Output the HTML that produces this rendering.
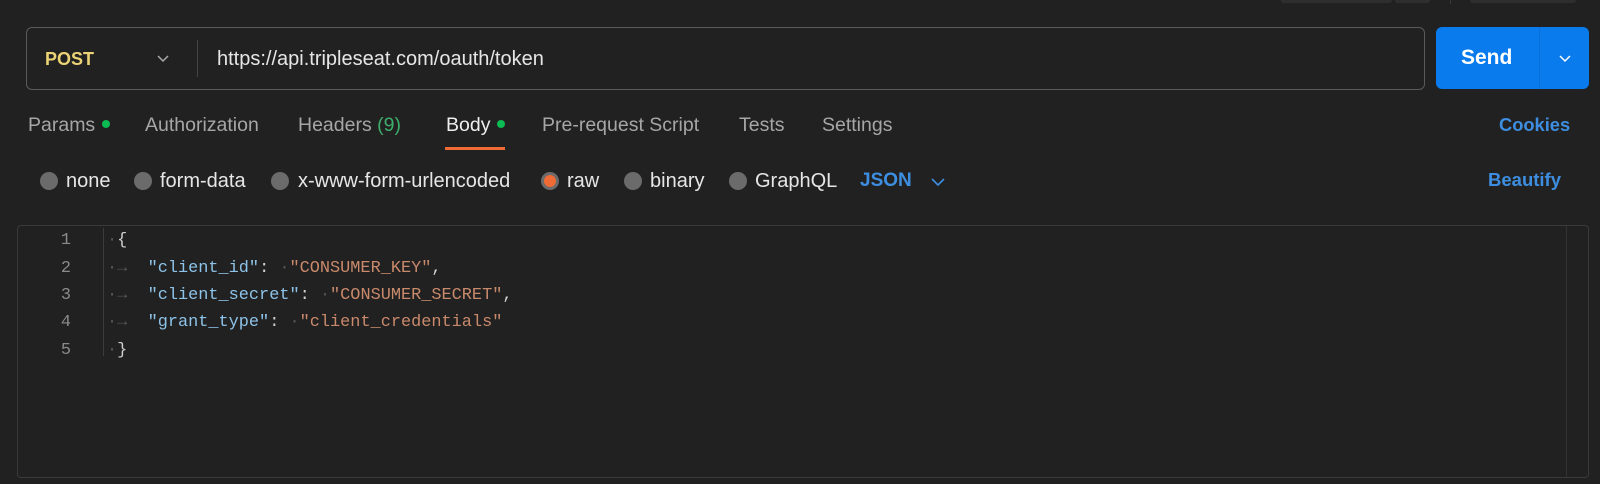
<!DOCTYPE html>
<html><head><meta charset="utf-8"><style>
body{margin:0;width:1600px;height:484px;background:#212121;overflow:hidden;font-family:"Liberation Sans",sans-serif;position:relative}
.a{position:absolute;white-space:nowrap;line-height:1}
.t{font-size:19.5px;color:#a6a6a6;top:116px}
.r{font-size:20px;color:#e6e6e6;top:171px}
.c{position:absolute;width:18px;height:18px;border-radius:50%;background:#6b6b6b;top:172px}
.dot{display:inline-block;width:8px;height:8px;border-radius:50%;background:#0cbb52;margin-left:7px;vertical-align:3px}
.m{font-family:"Liberation Mono",monospace;font-size:16.9px}
.ln{position:absolute;left:40px;width:31px;text-align:right;color:#8a8a8a;line-height:1}
.cd{position:absolute;left:107px;color:#d0d0d0;white-space:pre;line-height:1}
.k{color:#8dc3e8}.s{color:#c9896b}.g{color:#555}
</style></head><body>
<div class="a" style="left:1281px;top:-2px;width:111px;height:5px;background:#2e2e2e;border-radius:3px"></div>
<div class="a" style="left:1395px;top:-2px;width:35px;height:5px;background:#2e2e2e;border-radius:3px"></div>
<div class="a" style="left:1450px;top:0;width:1px;height:4px;background:#3a3a3a"></div>
<div class="a" style="left:1470px;top:-2px;width:106px;height:5px;background:#2e2e2e;border-radius:3px"></div>

<div class="a" style="left:26px;top:27px;width:1399px;height:63px;border:1.5px solid #5a5a5a;border-radius:6px;box-sizing:border-box"></div>
<div class="a" style="left:45px;top:50px;font-size:18px;font-weight:bold;color:#ead275">POST</div>
<svg class="a" style="left:156px;top:54px" width="14" height="10"><path d="M2 2l5 5 5-5" stroke="#aaa" stroke-width="1.5" fill="none"/></svg>
<div class="a" style="left:197px;top:40px;width:1px;height:37px;background:#444"></div>
<div class="a" style="left:217px;top:49px;font-size:20px;color:#e6e6e6">https://api.tripleseat.com/oauth/token</div>
<div class="a" style="left:1436px;top:27px;width:153px;height:62px;background:#097bed;border-radius:6px"></div>
<div class="a" style="left:1539px;top:27px;width:1px;height:62px;background:#0a6fd6"></div>
<div class="a" style="left:1461px;top:47px;font-size:21px;font-weight:bold;color:#fff">Send</div>
<svg class="a" style="left:1558px;top:54px" width="14" height="10"><path d="M2 2l5 5 5-5" stroke="#fff" stroke-width="1.5" fill="none"/></svg>

<div class="a t" style="left:28px">Params<span class="dot"></span></div>
<div class="a t" style="left:145px">Authorization</div>
<div class="a t" style="left:298px">Headers <span style="color:#3fae6b">(9)</span></div>
<div class="a t" style="left:446px;color:#eee">Body<span class="dot"></span></div>
<div class="a" style="left:445px;top:147px;width:60px;height:3px;background:#ef6a35"></div>
<div class="a t" style="left:542px">Pre-request Script</div>
<div class="a t" style="left:739px">Tests</div>
<div class="a t" style="left:822px">Settings</div>
<div class="a t" style="left:1499px;color:#3d8ee0;font-weight:bold;font-size:18.3px">Cookies</div>

<div class="c" style="left:40px"></div><div class="a r" style="left:66px">none</div>
<div class="c" style="left:134px"></div><div class="a r" style="left:160px">form-data</div>
<div class="c" style="left:271px"></div><div class="a r" style="left:298px">x-www-form-urlencoded</div>
<div class="c" style="left:541px;background:#ef6a35;border:3px solid #6b6b6b;width:12px;height:12px"></div><div class="a r" style="left:567px">raw</div>
<div class="c" style="left:624px"></div><div class="a r" style="left:650px">binary</div>
<div class="c" style="left:729px"></div><div class="a r" style="left:755px">GraphQL</div>
<div class="a r" style="left:860px;color:#3d8ee0;font-weight:bold;font-size:19px">JSON</div>
<svg class="a" style="left:930px;top:177px" width="16" height="10"><path d="M2 2l6 6 6-6" stroke="#3d8ee0" stroke-width="1.6" fill="none"/></svg>
<div class="a r" style="left:1488px;color:#3d8ee0;font-weight:bold;font-size:18.5px">Beautify</div>

<div class="a" style="left:17px;top:225px;width:1572px;height:253px;border:1px solid #3a3a3a;border-radius:4px;box-sizing:border-box"></div>
<div class="a" style="left:1566px;top:226px;width:1px;height:251px;background:#333"></div>
<div class="a" style="left:103px;top:228px;width:1px;height:128px;background:#3c3c3c"></div>
<div class="m">
<div class="ln" style="top:233px">1</div><div class="ln" style="top:261px">2</div><div class="ln" style="top:288px">3</div><div class="ln" style="top:315px">4</div><div class="ln" style="top:343px">5</div>
<div class="cd" style="top:233px"><span class="g">·</span>{</div>
<div class="cd" style="top:261px"><span class="g">·→</span>  <span class="k">"client_id"</span>: <span class="g">·</span><span class="s">"CONSUMER_KEY"</span>,</div>
<div class="cd" style="top:288px"><span class="g">·→</span>  <span class="k">"client_secret"</span>: <span class="g">·</span><span class="s">"CONSUMER_SECRET"</span>,</div>
<div class="cd" style="top:315px"><span class="g">·→</span>  <span class="k">"grant_type"</span>: <span class="g">·</span><span class="s">"client_credentials"</span></div>
<div class="cd" style="top:343px"><span class="g">·</span>}</div>
</div>
</body></html>
